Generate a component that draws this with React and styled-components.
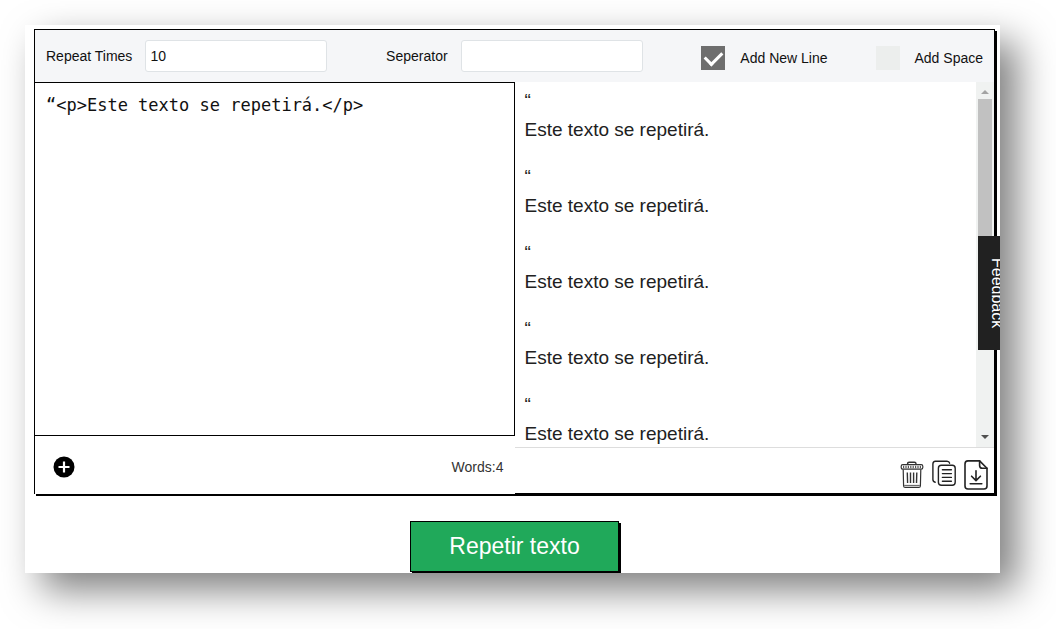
import React, { useState } from 'react';
import styled, { createGlobalStyle } from 'styled-components';

// only this many copies fit in the output box
const COPIES_IN_VIEW = 5;

const App = () => {

    const [times, setTimes] = useState('10');
    const [separator, setSeparator] = useState('');
    const [newLine, setNewLine] = useState(true);
    const [space, setSpace] = useState(false);
    const [text, setText] = useState('“<p>Este texto se repetirá.</p>');

    const copies = Array.from({ length: Math.min(Number(times) || 0, COPIES_IN_VIEW) });
    const sentence = text.replace(/<[^>]*>/g, '').replace('“', '');
    const words = text.split(/\s+/).filter(Boolean).length;

    return (
        <>
            <GlobalStyle />
            <Card>
                <Tool>
                    <Toolbar>
                        <Field>
                            <label htmlFor='times'>Repeat Times</label>
                            <TextInput id='times' type='text' value={times} onChange={(e) => setTimes(e.target.value)} />
                        </Field>
                        <Field>
                            <label htmlFor='separator'>Seperator</label>
                            <TextInput id='separator' type='text' value={separator} onChange={(e) => setSeparator(e.target.value)} />
                        </Field>
                        <Checks>
                            <CheckLabel>
                                <Check type='checkbox' checked={newLine} onChange={(e) => setNewLine(e.target.checked)} />
                                Add New Line
                            </CheckLabel>
                            <CheckLabel>
                                <Check type='checkbox' checked={space} onChange={(e) => setSpace(e.target.checked)} />
                                Add Space
                            </CheckLabel>
                        </Checks>
                    </Toolbar>

                    <Panes>
                        <EditorPane>
                            <Editor aria-label='Text' spellCheck={false} value={text} onChange={(e) => setText(e.target.value)} />
                            <EditorFooter>
                                <IconButton type='button' aria-label='Add file'>
                                    <PlusIcon />
                                </IconButton>
                                <span>Words:{words}</span>
                            </EditorFooter>
                        </EditorPane>

                        <OutputPane>
                            <OutputRow>
                                <Output>
                                    {copies.map((_, i) => (
                                        <div key={i}>
                                            “
                                            <p>{sentence}</p>
                                        </div>
                                    ))}
                                </Output>
                                <Scrollbar aria-hidden='true'>
                                    <Arrow $up />
                                    <Thumb />
                                    <Arrow />
                                </Scrollbar>
                            </OutputRow>
                            <OutputFooter>
                                <IconButton type='button' aria-label='Delete'><TrashIcon /></IconButton>
                                <IconButton type='button' aria-label='Copy'><CopyIcon /></IconButton>
                                <IconButton type='button' aria-label='Download'><DownloadIcon /></IconButton>
                            </OutputFooter>
                        </OutputPane>
                    </Panes>
                </Tool>

                <RepeatButton type='button'>Repetir texto</RepeatButton>
                <Feedback type='button'>Feedback</Feedback>
            </Card>
        </>
    )
}

export default App


const PlusIcon = () => (
    <svg width='22' height='22' viewBox='0 0 22 22'>
        <circle cx='11' cy='11' r='10.5' fill='#000' />
        <path d='M11 5.5v11M5.5 11h11' stroke='#fff' strokeWidth='2.2' />
    </svg>
)

const TrashIcon = () => (
    <svg width='24' height='30' viewBox='0 -1 24 30' fill='none' stroke='#333' strokeWidth='1.2'>
        <path d='M7.6 3.5V2.8Q7.6 1.2 9.2 1.2H14.4Q16 1.2 16 2.8V3.5' strokeWidth='1.4' />
        <rect x='1.2' y='3.6' width='21.6' height='4.6' rx='1.6' />
        <path d='M3 6h18' strokeWidth='2.4' strokeDasharray='1.2 1.2' stroke='#555' />
        <path d='M3.2 8.4L3.6 25Q3.7 26.4 5.2 26.4H18.8Q20.3 26.4 20.4 25L20.8 8.4' />
        <path d='M4.2 24.4h15.6' strokeWidth='0.8' />
        <path d='M7.3 11.5l.3 10.5M10.5 11.5v10.5M13.6 11.5v10.5M16.8 11.5l-.3 10.5' strokeWidth='1.4' />
    </svg>
)

const CopyIcon = () => (
    <svg width='24' height='28' viewBox='0 0 24 28' fill='none' stroke='#222' strokeWidth='1.4' strokeLinecap='round'>
        <path d='M3.2 22.2Q.9 21.8.9 19.6V3.9Q.9 1.2 3.4 1.2H15Q17.2 1.2 17.6 3.2' />
        <rect x='6.4' y='5.2' width='16.8' height='20' rx='3' />
        <path d='M10.4 9.8h9M10.4 13.6h9M10.4 17.4h9M10.4 21.2h9' />
    </svg>
)

const DownloadIcon = () => (
    <svg width='24' height='30' viewBox='0 0 24 30' fill='none' stroke='#222' strokeWidth='1.6' strokeLinecap='round' strokeLinejoin='round'>
        <path d='M15.6 .9H4Q1 .9 1 3.9V26Q1 29 4 29H20Q23 29 23 26V8.2Z' />
        <path d='M15.6 .9V5.4Q15.6 8.2 18.4 8.2H23' />
        <path d='M12 10.8V20.4M7.6 16.2L12 20.6L16.4 16.2M6.2 23.8H17.8' />
    </svg>
)


const GlobalStyle = createGlobalStyle`
    *{
        box-sizing: border-box;
    }

    body{
        margin: 0;
        padding: 25px 56px 56px 25px;
        background: #fff;
        color: #111;
        font-family: 'Liberation Sans', Arial, sans-serif;
        font-size: 14px;
    }
`;

const Card = styled.main`
    position: relative;
    display: flex;
    flex-direction: column;
    align-items: center;
    gap: 27px;
    padding: 4px 5px 1px 9px;
    background: #fff;
    overflow: hidden;
    box-shadow: 17px 17px 36px rgba(0, 0, 0, 0.5);
`;

const Tool = styled.section`
    width: 100%;
    border: 1px solid #000;
    box-shadow: 2px 2px 0 #000;
`;

const Toolbar = styled.div`
    display: flex;
    justify-content: space-between;
    align-items: center;
    height: 52px;
    padding: 0 11px;
    background: #f5f6f8;
`;

const Field = styled.div`
    display: flex;
    align-items: center;
    gap: 13px;
`;

const TextInput = styled.input`
    width: 182px;
    height: 32px;
    padding: 0 4px;
    border: 1px solid #dfe3e6;
    border-radius: 3px;
    background: #fff;
    color: #111;
    font-family: inherit;
    font-size: 14px;
`;

const Checks = styled.div`
    display: flex;
    gap: 48px;
    padding-top: 4px;
`;

const CheckLabel = styled.label`
    display: flex;
    align-items: center;
    gap: 15px;
`;

const Check = styled.input`
    appearance: none;
    width: 24px;
    height: 24px;
    margin: 0;
    background: #eceeed;

    &:checked{
        background: #6e6e6e;
    }

    &:checked::before{
        content: '';
        display: block;
        width: 8px;
        height: 14px;
        margin: 2px auto 0;
        border: solid #fff;
        border-width: 0 3px 3px 0;
        transform: rotate(45deg);
    }
`;

const Panes = styled.div`
    display: grid;
    grid-template-columns: 1fr 1fr;
`;

/* sits over the bottom border of the tool */
const EditorPane = styled.div`
    display: flex;
    flex-direction: column;
    margin-bottom: -1px;
    background: #fff;
`;

const Editor = styled.textarea`
    display: block;
    width: 100%;
    height: 354px;
    padding: 10px 11px;
    border: solid #000;
    border-width: 1px 1px 1px 0;
    border-radius: 0;
    outline: 0;
    resize: none;
    color: #111;
    font-family: 'DejaVu Sans Mono', monospace;
    font-size: 17px;
    line-height: 24px;
`;

const EditorFooter = styled.div`
    flex: 1;
    display: flex;
    justify-content: space-between;
    align-items: center;
    padding: 3px 11px 0 18px;
    height: 58px;
    color: #333;
`;

const IconButton = styled.button`
    display: flex;
    padding: 0;
    border: 0;
    background: transparent;
    cursor: pointer;
`;

const OutputPane = styled.div`
    min-width: 0;
`;

const OutputRow = styled.div`
    display: flex;
    height: 366px;
    border-bottom: 1px solid #ddd;
`;

const Output = styled.div`
    flex: 1;
    padding: 5px 10px 0;
    overflow: hidden;
    color: #212121;
    font-size: 19px;
    line-height: 27px;

    p{
        margin: 2px 0 20px;
    }
`;

const Scrollbar = styled.div`
    display: flex;
    flex-direction: column;
    align-items: center;
    width: 18px;
    background: #f0f2f1;
`;

const Arrow = styled.span`
    margin: ${({ $up }) => ($up ? '8px 0 5px' : 'auto 0 8px')};
    border: solid transparent;
    border-width: ${({ $up }) => ($up ? '0 4px 4px' : '4px 4px 0')};
    border-bottom-color: ${({ $up }) => ($up ? '#a3a3a3' : 'transparent')};
    border-top-color: ${({ $up }) => ($up ? 'transparent' : '#505050')};
`;

const Thumb = styled.span`
    width: 14px;
    height: 180px;
    background: #c1c1c1;
`;

const OutputFooter = styled.div`
    display: flex;
    justify-content: flex-end;
    align-items: flex-start;
    gap: 8px;
    height: 45px;
    padding: 12px 6px 0;
`;

const RepeatButton = styled.button`
    height: 51px;
    padding: 0 38px;
    border: 1px solid #000;
    background: #20a95a;
    box-shadow: 2px 2px 0 #000;
    color: #fff;
    font-family: inherit;
    font-size: 23px;
    cursor: pointer;
`;

/* tab pinned to the side, partly cut off by the card edge */
const Feedback = styled.button`
    position: absolute;
    top: 211px;
    right: -15px;
    width: 37px;
    height: 114px;
    padding: 0;
    border: 0;
    background: #212121;
    color: #fff;
    font-family: inherit;
    font-size: 16px;
    writing-mode: vertical-rl;
    cursor: pointer;
`;
